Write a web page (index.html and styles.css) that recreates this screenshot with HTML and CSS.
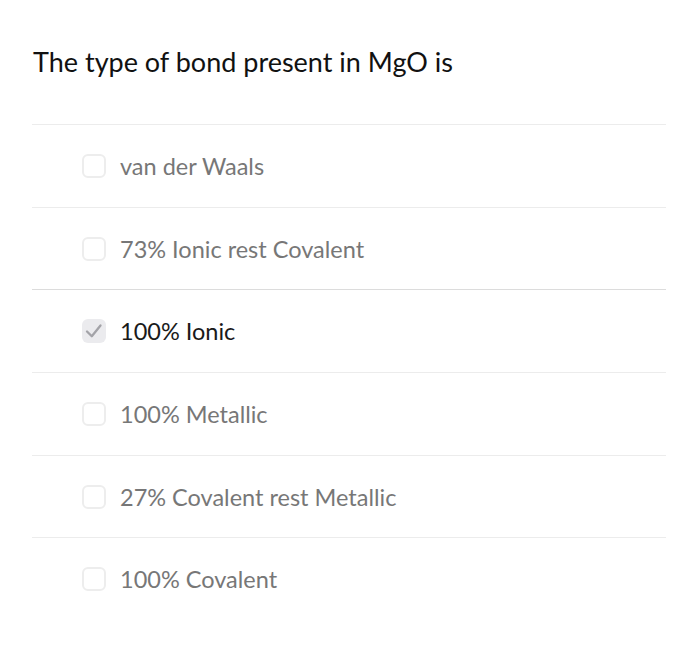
FILE: index.html
```html
<!DOCTYPE html>
<html>
<head>
<meta charset="utf-8">
<link rel="stylesheet" href="styles.css">
</head>
<body>
<div class="quiz">
  <h1 class="question">The type of bond present in MgO is</h1>
  <ul class="options">
    <li class="option"><span class="box"></span><span class="label">van der Waals</span></li>
    <li class="option"><span class="box"></span><span class="label">73% Ionic rest Covalent</span></li>
    <li class="option selected"><span class="box"><svg viewBox="0 0 24 24" width="24" height="24"><path d="M5 12.5 L9.8 17.3 L18.5 6.5" fill="none" stroke="#a3a3a8" stroke-width="2.3" stroke-linecap="round" stroke-linejoin="round"/></svg></span><span class="label">100% Ionic</span></li>
    <li class="option"><span class="box"></span><span class="label">100% Metallic</span></li>
    <li class="option"><span class="box"></span><span class="label">27% Covalent rest Metallic</span></li>
    <li class="option"><span class="box"></span><span class="label">100% Covalent</span></li>
  </ul>
</div>
</body>
</html>
```

FILE: styles.css
```css
html, body {
  margin: 0;
  padding: 0;
  background: #ffffff;
}
.quiz {
  padding: 44px 0 0 32px;
  width: 634px;
  font-family: Lato, "Open Sans", sans-serif;
}
.question {
  margin: 0 0 44px 1px;
  font-size: 27px;
  font-weight: 400;
  line-height: 36px;
  color: #111;
}
.options {
  list-style: none;
  margin: 0;
  padding: 0;
}
.option {
  display: flex;
  align-items: center;
  gap: 14px;
  padding-left: 50px;
  border-top: 1.5px solid #ececec;
  box-sizing: border-box;
  height: 82.7px;
}
.option.selected {
  border-top-color: #dcdcdc;
}
.box {
  width: 24px;
  height: 24px;
  box-sizing: border-box;
  border: 2px solid #ededed;
  border-radius: 6px;
  flex: none;
}
.selected .box {
  border: none;
  background: #ebebee;
}
.box svg {
  display: block;
  width: 24px;
  height: 24px;
}
.label {
  font-size: 23.5px;
  color: #777;
  line-height: 30px;
}
.selected .label {
  color: #1a1a1a;
}
```
